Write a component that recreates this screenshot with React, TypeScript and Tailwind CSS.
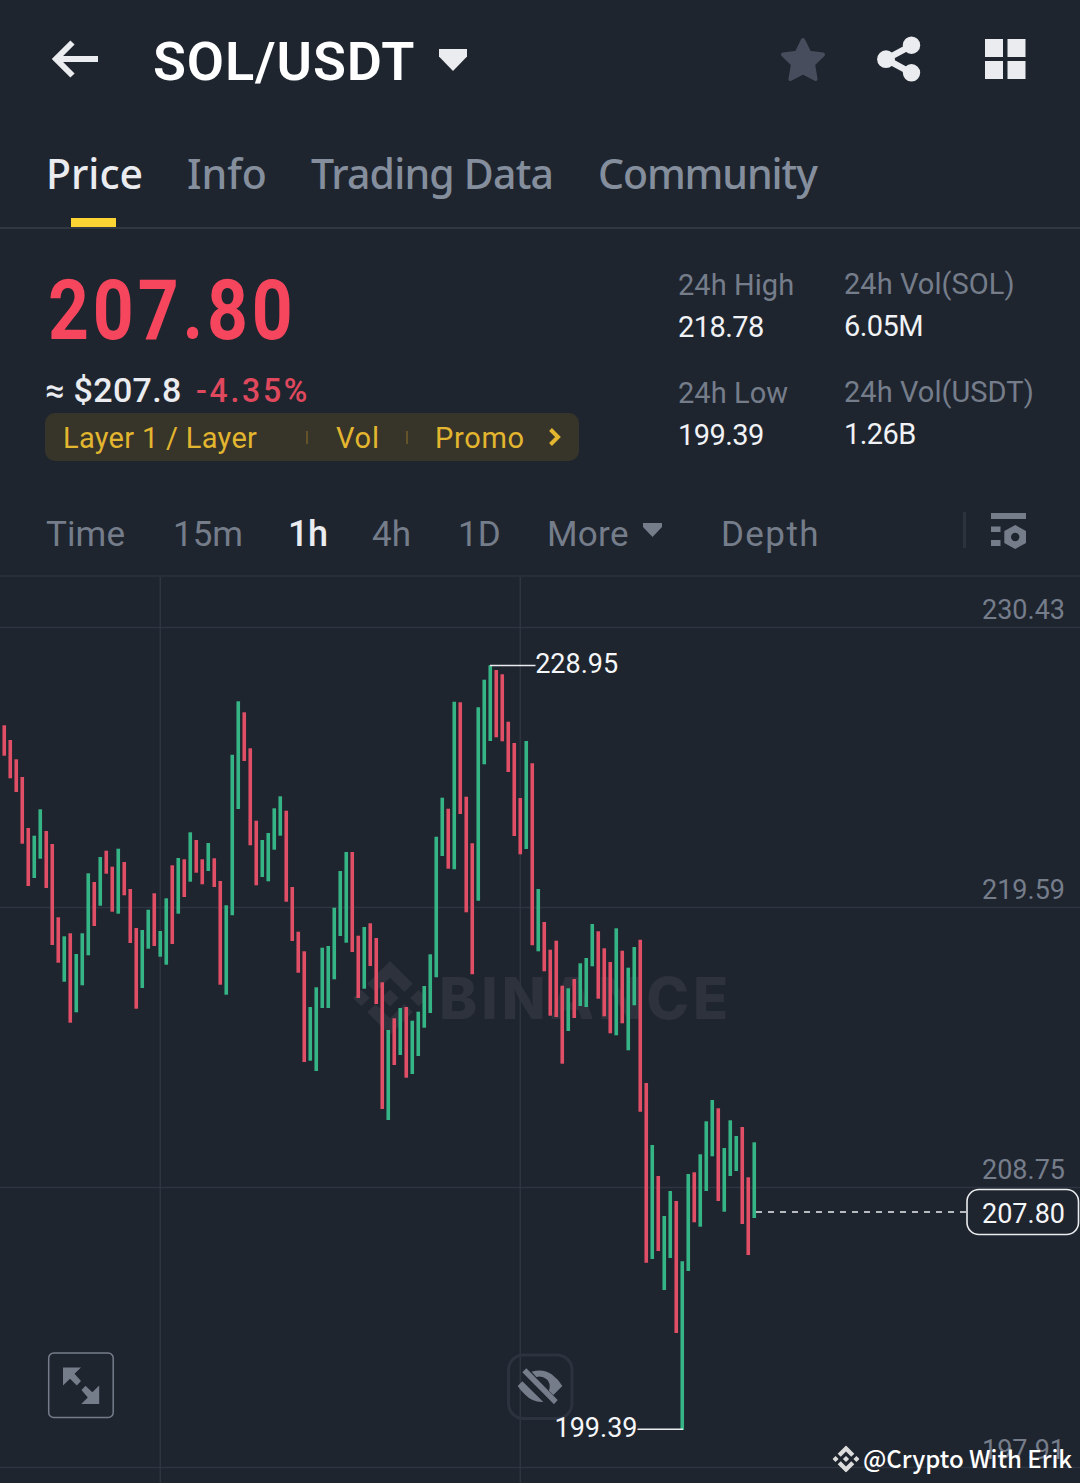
import React from 'react';

type Candle = [dir: 'u' | 'd', high: number, low: number];

const FIRST_X = 4.25;
const STEP = 6;

const candles: Candle[] = [
  ['d', 725.3, 755.7], ['d', 740, 778.3], ['d', 759.3, 792], ['d', 777, 843.7], ['d', 828, 886],
  ['u', 835.7, 878], ['u', 809.3, 858.7], ['d', 831, 888], ['d', 844, 945], ['d', 917.3, 962.7],
  ['u', 936.3, 981.7], ['d', 933.3, 1022.7], ['u', 954, 1012.3], ['u', 933.3, 985.3], ['u', 873.3, 955.3],
  ['d', 882, 926], ['u', 857, 905.7], ['d', 850.7, 873.7], ['d', 866.7, 911.7], ['u', 848.7, 913.7],
  ['d', 862, 895.3], ['d', 889, 943], ['d', 928, 1008.7], ['u', 930, 988], ['u', 909.7, 948.7],
  ['d', 893.3, 946], ['u', 931, 956.7], ['u', 898.3, 964.7], ['d', 865.3, 944], ['u', 858, 913.7],
  ['d', 859.3, 897], ['u', 832.3, 881.7], ['d', 840, 872.7], ['d', 859.3, 884.3], ['u', 843, 871],
  ['d', 858.3, 887], ['d', 881, 984.7], ['u', 905.3, 994.7], ['u', 754.7, 915.3], ['u', 701.3, 809],
  ['d', 712.3, 761], ['d', 748.3, 845.3], ['d', 820.7, 885.3], ['u', 840, 877], ['u', 833, 881.3],
  ['u', 808.3, 849.7], ['u', 796.3, 835.7], ['d', 810.7, 901.7], ['d', 887, 941], ['d', 931.7, 972.7],
  ['d', 951.3, 1062], ['u', 1007, 1060.7], ['u', 987.3, 1071], ['u', 947.7, 1008], ['u', 946, 1008],
  ['u', 907.7, 979.3], ['u', 871, 936], ['u', 852, 942.7], ['d', 852, 952], ['d', 935.7, 998],
  ['u', 927, 988.7], ['d', 923.3, 966], ['d', 938, 1004], ['d', 982.3, 1109], ['u', 1030, 1120],
  ['d', 1018.3, 1065], ['u', 1008, 1055], ['d', 1007, 1077.7], ['u', 1020.7, 1074], ['u', 1011.7, 1056],
  ['u', 986, 1027.7], ['u', 954.3, 1013], ['u', 836.7, 977.3], ['u', 797.7, 856], ['d', 808.7, 868.7],
  ['u', 701.7, 869.3], ['d', 702.3, 814], ['d', 796.7, 912.3], ['d', 843.3, 974.3], ['u', 707.3, 900.7],
  ['u', 679.7, 764.3], ['u', 665.3, 741], ['d', 670, 737.3], ['d', 674.3, 741.3], ['d', 721.7, 772],
  ['d', 743, 836], ['d', 798, 854.3], ['u', 741, 849], ['d', 763.3, 945.3], ['u', 889, 951.3],
  ['d', 922, 971.3], ['d', 949.7, 1015.7], ['d', 940.7, 1017], ['d', 985.7, 1063.7], ['u', 988.3, 1031],
  ['d', 979, 1018], ['u', 963.3, 1006], ['u', 958, 1007], ['u', 924, 966.3], ['d', 931.3, 998.7],
  ['d', 948.3, 1016.3], ['d', 962, 1033.3], ['u', 928.3, 1035.3], ['d', 950.7, 1023.3], ['u', 967.7, 1050.3],
  ['u', 947, 1005.3], ['d', 939.7, 1111.7], ['d', 1083, 1262.7], ['u', 1145, 1259], ['d', 1176, 1251],
  ['u', 1216, 1290], ['u', 1191, 1258], ['d', 1201, 1333], ['u', 1261.3, 1430], ['u', 1174, 1271],
  ['d', 1172.3, 1222.3], ['u', 1154.3, 1226.7], ['u', 1121.3, 1191], ['u', 1100, 1156.3], ['d', 1108.3, 1201],
  ['u', 1148, 1211.7], ['u', 1120.3, 1176], ['u', 1136, 1171], ['d', 1127, 1224], ['d', 1177.3, 1255],
  ['u', 1142.3, 1218],
];

const gridLines = [
  { y: 627.5, label: '230.43' },
  { y: 907.5, label: '219.59' },
  { y: 1187.5, label: '208.75' },
  { y: 1467.5, label: '197.91' },
];

function BinanceMark({ x, y, size, fill }: { x: number; y: number; size: number; fill: string }) {
  return (
    <svg x={x} y={y} width={size} height={size} viewBox="0 0 126.61 126.61" fill={fill}>
      <path d="M38.73 53.2 63.31 28.62 87.9 53.21 102.2 38.91 63.31 0 24.43 38.9ZM0 63.31 14.3 49.01 28.6 63.31 14.3 77.61ZM38.73 73.41 63.31 98 87.9 73.4 102.2 87.69 63.31 126.61 24.43 87.72ZM98 63.31 112.3 49.01 126.6 63.31 112.3 77.61ZM77.83 63.3 63.31 48.78 48.79 63.3 63.31 77.83Z" />
    </svg>
  );
}

function Header() {
  return (
    <header className="flex h-[118px] shrink-0 items-center pl-[52px] pr-[54px]">
      <svg width="46" height="38" viewBox="0 0 46 38" fill="none" stroke="#eaecef" strokeWidth="6">
        <path d="M46 19H5M20.500 2.500 4 19l16.500 16.500" />
      </svg>
      <h1 className="ml-[55px] w-[264px] pt-[6px] text-[54px] font-semibold leading-[54px] tracking-[0.9px] text-white">SOL/USDT</h1>
      <svg className="ml-[22px] mt-[2px]" width="28" height="22" viewBox="0 0 28 22" fill="#eaecef">
        <path d="M0 0H28V7.500L14 22 0 7.500Z" />
      </svg>
      <svg className="ml-auto" width="46" height="48" viewBox="0 0 46 48" fill="#474d5d" stroke="#474d5d" strokeWidth="4" strokeLinejoin="round">
        <path d="M23 5 29.200 17.700 43 19.500 33 29.200 35.600 44 23 37.500 10.400 44 13 29.200 3 19.500 16.800 17.700Z" />
      </svg>
      <svg className="ml-[51px]" width="44" height="48" viewBox="0 0 44 48" fill="#eaecef">
        <path d="M34.500 10.500 9 24.200 34.500 38" fill="none" stroke="#eaecef" strokeWidth="6.500" />
        <circle cx="9" cy="24.200" r="8.900" />
        <circle cx="34.500" cy="10.200" r="8.700" />
        <circle cx="34.500" cy="37.800" r="8.700" />
      </svg>
      <svg className="ml-[64px]" width="41" height="40" viewBox="0 0 41 40" fill="#eaecef">
        <path d="M0 0H18V18H0ZM22.500 0H40.500V18H22.500ZM0 22H18V40H0ZM22.500 22H40.500V40H22.500Z" />
      </svg>
    </header>
  );
}

function Tabs() {
  return (
    <nav className="flex h-[111px] shrink-0 items-stretch border-b-2 border-[#323842] pl-[46px] pt-[2px] font-['Noto_Sans',sans-serif] text-[41px] font-medium text-[#848e9c]">
      <div className="relative flex w-[141px] items-center text-[#eaecef]">
        Price
        <span className="absolute bottom-0 left-[25px] h-[9px] w-[45px] bg-[#fcd535]" />
      </div>
      <div className="flex w-[124px] items-center">Info</div>
      <div className="flex w-[287px] items-center whitespace-nowrap tracking-[-0.8px]">Trading Data</div>
      <div className="flex items-center tracking-[-1.1px]">Community</div>
    </nav>
  );
}

function Stat({ label, value }: { label: string; value: string }) {
  return (
    <div className="flex flex-col gap-3 whitespace-nowrap text-[29px] leading-[30px]">
      <span className="tracking-[0.05px] text-[#757d8b]">{label}</span>
      <span className="font-[450] tracking-[-0.55px] text-[#f0f2f5]">{value}</span>
    </div>
  );
}

function Summary() {
  return (
    <section className="flex h-[263px] shrink-0 justify-between pl-[45px] pr-[46px]">
      <div className="flex w-[534px] flex-col pt-[40px]">
        <div className="ml-[3px] w-[290px] origin-left scale-x-[0.86] text-[83px] font-bold leading-[83px] tracking-[4.5px] text-[#f6465d]">207.80</div>
        <div className="mt-[18px] flex text-[34px] font-medium leading-[40px]">
          <span className="w-[151px] whitespace-nowrap tracking-[0.35px] text-[#eaecef]">≈ $207.8</span>
          <span className="origin-left scale-x-[0.94] tracking-[2.9px] text-[#e0485e]">-4.35%</span>
        </div>
        <div className="mt-[3px] flex h-[48px] items-center rounded-[10px] bg-[#37342a] pl-[18px] text-[29px] text-[#e3b62f]">
          <span className="w-[243px] pt-[3px] tracking-[0.3px]">Layer 1 / Layer</span>
          <span className="h-[13px] w-[2px] bg-[#635328]" />
          <span className="ml-[28px] w-[70px] pt-[3px] tracking-[0.8px]">Vol</span>
          <span className="h-[13px] w-[2px] bg-[#635328]" />
          <span className="ml-[27px] w-[114px] pt-[3px] tracking-[0.7px]">Promo</span>
          <svg width="12" height="18" viewBox="0 0 12 18" fill="none" stroke="#e3b62f" strokeWidth="4">
            <path d="M1.500 1.500 9 9l-7.500 7.500" />
          </svg>
        </div>
      </div>
      <div className="flex pt-[41px]">
        <div className="flex w-[166px] flex-col gap-9">
          <Stat label="24h High" value="218.78" />
          <Stat label="24h Low" value="199.39" />
        </div>
        <div className="-mt-px flex w-[190px] flex-col gap-9">
          <Stat label="24h Vol(SOL)" value="6.05M" />
          <Stat label="24h Vol(USDT)" value="1.26B" />
        </div>
      </div>
    </section>
  );
}

function Intervals() {
  return (
    <div className="flex h-[85px] shrink-0 items-center border-b-2 border-[#282e38] pl-[46px] pr-[54px] text-[35px] text-[#757d8b]">
      <span className="w-[127px] pt-[3px] tracking-[0.1px]">Time</span>
      <span className="w-[115px] pt-[3px]">15m</span>
      <span className="w-[84px] text-[36px] font-medium tracking-[-0.5px] text-[#eaecef]">1h</span>
      <span className="w-[86px] pt-[3px]">4h</span>
      <span className="w-[89px] pt-[3px]">1D</span>
      <span className="w-[96px] pt-[3px] tracking-[0.3px]">More</span>
      <svg className="-mt-[7px]" width="19" height="14" viewBox="0 0 19 14" fill="#757d8b">
        <path d="M0 0H19V4L9.500 14 0 4Z" />
      </svg>
      <span className="ml-[59px] pt-[3px] tracking-[1.4px]">Depth</span>
      <span className="-mt-[7px] ml-auto h-[36px] w-[3px] bg-[#2d333d]" />
      <svg className="-mt-[5px] ml-[25px]" width="35" height="36" viewBox="0 0 35 36" fill="#757d8b">
        <path d="M0 0H35V6H0ZM0 13.500H9.500V19H0ZM0 27H9.500V33H0Z" />
        <path fillRule="evenodd" d="M24.200 12 35 18V30L24.200 36 13.300 30V18ZM24.200 19.800A4.200 4.200 0 1 0 24.200 28.200 4.200 4.200 0 1 0 24.200 19.800Z" />
      </svg>
    </div>
  );
}

function Chart() {
  return (
    <svg className="block shrink-0" width="1080" height="906" viewBox="0 577 1080 906" fontFamily="Roboto, sans-serif">
      <BinanceMark x={353} y={961} size={74} fill="#2d323d" />
      <text x="439" y="1019" fontFamily="Inter, sans-serif" fontSize="57.500" fontWeight="800" textLength="289" lengthAdjust="spacing" fill="#2d323d">BINANCE</text>
      <g stroke="#2f3540" strokeWidth="1.500">
        <path d="M160.250 577V1483M520.250 577V1483" />
        {gridLines.map((g) => <path key={g.y} d={`M0 ${g.y}H1080`} />)}
      </g>
      <g fontSize="27" fill="#757d8b">
        {gridLines.map((g) => <text key={g.y} x="982" y={g.y - 8.8}>{g.label}</text>)}
      </g>

      <g strokeWidth="3.600">
        {candles.map(([dir, high, low], i) => (
          <path key={i} d={`M${FIRST_X + i * STEP} ${high}V${low}`} stroke={dir === 'u' ? '#35b586' : '#e04f66'} />
        ))}
      </g>

      <g stroke="#eaecef" strokeWidth="1.500" fill="none">
        <path d="M490 665.500H535.500M637.500 1429.300H683" />
        <path d="M756 1212H967" strokeDasharray="6 6" />
      </g>
      <rect x="967" y="1189.500" width="111.500" height="45" rx="12" fill="#1f252f" stroke="#eaecef" strokeWidth="1.600" />

      <rect x="48.700" y="1353" width="64.500" height="64.500" rx="5" fill="none" stroke="#757d8b" strokeWidth="1.500" />
      <path fill="#757d8b" d="M63 1367.500H81L74.500 1373.700 81 1381 76.800 1385.500 70 1378.700 63 1385.500ZM99.200 1404H81.200L87.800 1397.500 81.500 1390 85.500 1385.700 92.300 1392.300 99.200 1385.500Z" />

      <rect x="508.500" y="1355" width="63.500" height="63.500" rx="15" fill="none" stroke="#2d333e" strokeWidth="3" />
      <g fill="#757d8b" transform="translate(500 1345) scale(0.3333)">
        <path d="M67 82 79 70 173 165 162 178Z" />
        <path d="M95 80Q130 70 155 88 175 103 187 123L160 150 147 137Q154 115 140 103 126 91 109 96Z" />
        <path d="M67 109 130 171Q98 173 74 148 62 136 53 123Z" />
      </g>

      <g fontSize="27" fill="#f5f6f8">
        <text x="535.200" y="672.700">228.95</text>
        <text x="554.500" y="1436.700">199.39</text>
        <text x="982" y="1223">207.80</text>
      </g>

      <BinanceMark x={832.5} y={1445.5} size={27} fill="#dcdcdd" />
      <text x="863" y="1467.700" fontFamily="'Noto Sans CJK SC', sans-serif" fontSize="24" fontWeight="500" fill="#ffffff">@Crypto With Erik</text>
    </svg>
  );
}

export default function App() {
  return (
    <div className="flex h-[1483px] w-[1080px] flex-col overflow-hidden bg-[#1f252f] font-['Roboto',sans-serif]">
      <Header />
      <Tabs />
      <Summary />
      <Intervals />
      <Chart />
    </div>
  );
}
